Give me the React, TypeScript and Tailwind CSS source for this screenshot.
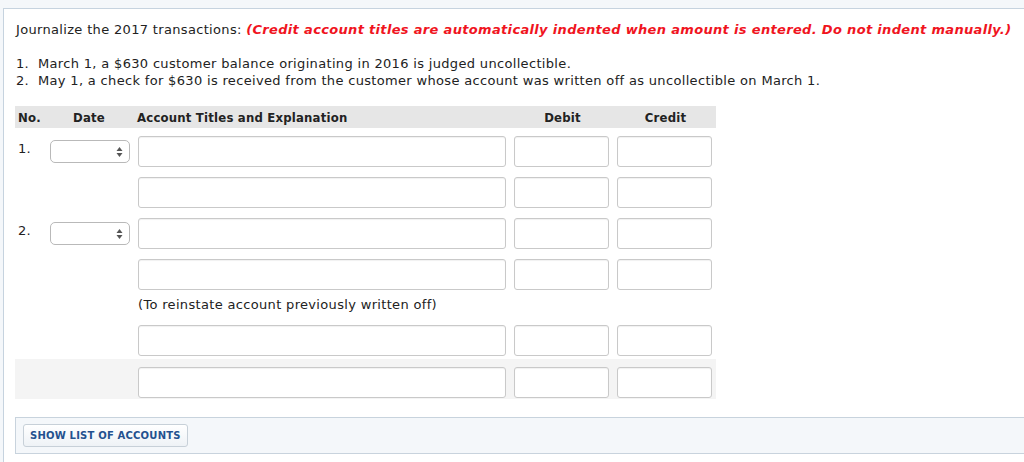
import React from "react";

function SelectBox() {
  return (
    <div className="w-[80px] h-[23px] border border-[#b9b9b9] rounded-[5px] bg-white flex items-center justify-end pr-[6px]">
      <svg width="7" height="12" viewBox="0 0 7 12">
        <path d="M3.5 1 L6.5 5 L0.5 5 Z" fill="#555" />
        <path d="M3.5 11 L6.5 7 L0.5 7 Z" fill="#555" />
      </svg>
    </div>
  );
}

function Field({ w }: { w: string }) {
  return <div className={`${w} h-[31px] border border-[#c9c9c9] rounded-[3px] bg-white shadow-[inset_0_1px_1px_rgba(0,0,0,0.06)]`} />;
}

function Cells({ no, date }: { no?: string; date?: boolean }) {
  return (
    <>
      <div className="w-[30px] pl-[3px] -mt-[6px]">{no}</div>
      <div className="w-[89px] pl-[5px]">{date && <SelectBox />}</div>
      <div className="w-[376px] pl-[4px]">
        <Field w="w-[368px]" />
      </div>
      <div className="w-[103px] pl-[4px]">
        <Field w="w-[95px]" />
      </div>
      <div className="w-[103px] pl-[4px]">
        <Field w="w-[95px]" />
      </div>
    </>
  );
}

function Row({ no, date }: { no?: string; date?: boolean }) {
  return (
    <div className="flex h-[41px] items-center">
      <Cells no={no} date={date} />
    </div>
  );
}

export default function App() {
  return (
    <div className="w-[1024px] h-[462px] overflow-hidden bg-[#f4f7fa] pt-[8px] pl-[3px] font-['DejaVu_Sans',sans-serif] text-[13px] leading-[17px] text-[#222] tracking-[0.33px]">
      <div className="w-[1040px] h-[470px] bg-white border-t border-l border-[#c6d3df] pl-[11px] pt-[12px]">
        {/* Instructions */}
        <p className="pl-[1px]">
          Journalize the 2017 transactions:{" "}
          <span className="font-bold italic text-[#f0141e]">
            (Credit account titles are automatically indented when amount is entered. Do not indent manually.)
          </span>
        </p>
        <ol className="mt-[17px] pl-[1px]">
          <li className="flex">
            <span className="w-[22px]">1.</span>
            <span>March 1, a $630 customer balance originating in 2016 is judged uncollectible.</span>
          </li>
          <li className="flex">
            <span className="w-[22px]">2.</span>
            <span>May 1, a check for $630 is received from the customer whose account was written off as uncollectible on March 1.</span>
          </li>
        </ol>

        {/* Journal table */}
        <div className="w-[701px] mt-[17px]">
          <div className="flex h-[22px] items-center bg-[#e6e6e6] font-['DejaVu_Sans_Condensed','DejaVu_Sans',sans-serif] font-bold text-[13px] tracking-[0.2px]">
            <div className="w-[30px] pl-[3px]">No.</div>
            <div className="w-[89px] pl-[28px]">Date</div>
            <div className="w-[376px] pl-[3px]">Account Titles and Explanation</div>
            <div className="w-[103px] text-center pl-[2px]">Debit</div>
            <div className="w-[103px] text-center pl-[2px]">Credit</div>
          </div>
          <div className="h-[3px]" />
          <Row no="1." date />
          <Row />
          <Row no="2." date />
          <Row />
          <div className="h-[25px] pl-[123px] pt-[1px]">(To reinstate account previously written off)</div>
          <Row />
          <div className="flex h-[40px] -mt-[2px] items-start pt-[8px] bg-[#f4f4f4]">
            <Cells />
          </div>
        </div>

        {/* Footer */}
        <div className="mt-[18px] h-[37px] bg-[#f4f7fa] border border-r-0 border-[#c8d3dd] flex items-center pl-[7px]">
          <button className="h-[23px] px-[6px] rounded-[3px] border border-[#c7d0d8] bg-gradient-to-b from-white to-[#eef2f6] text-[#23518f] font-bold text-[10px] tracking-[0.2px]">
            SHOW LIST OF ACCOUNTS
          </button>
        </div>
      </div>
    </div>
  );
}
